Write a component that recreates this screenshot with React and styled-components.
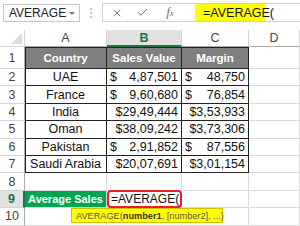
import React from 'react';
import styled, { createGlobalStyle, css } from 'styled-components';
import { X, Check } from 'lucide-react';

const GlobalStyle = createGlobalStyle`
  html, body { margin: 0; padding: 0; background: #fff; }
  body { font-family: "Liberation Sans", Arial, sans-serif; overflow: hidden; }
  * { box-sizing: border-box; }
`;

const Page = styled.div`
  width: 300px;
  height: 226px;
  overflow: hidden;
  background: #fff;
`;

const FormulaBar = styled.div`
  height: 30px;
  display: flex;
  align-items: flex-start;
  padding: 4px 0 0 3px;
`;

const NameBox = styled.div`
  width: 77px;
  height: 18px;
  border: 1px solid #c6c6c6;
  display: flex;
  align-items: center;
  justify-content: space-between;
  padding: 0 4px 0 5px;
  font-size: 12px;
  color: #222;
`;

const Caret = styled.span`
  width: 0;
  height: 0;
  border-left: 3px solid transparent;
  border-right: 3px solid transparent;
  border-top: 3px solid #777;
`;

const Dots = styled.div`
  width: 22px;
  height: 18px;
  display: flex;
  flex-direction: column;
  align-items: center;
  justify-content: center;
  gap: 2px;
  span { width: 2px; height: 2px; background: #c4c4c4; }
`;

const InputBox = styled.div`
  flex: 1;
  height: 19px;
  border: 1px solid #d0d0d0;
  border-right: none;
  margin-top: -1px;
  display: flex;
  align-items: center;
`;

const IconBtn = styled.div`
  width: ${p => p.$w}px;
  display: flex;
  justify-content: center;
  align-items: center;
  color: #555;
`;

const Fx = styled.span`
  font-family: "Liberation Serif", serif;
  font-style: italic;
  font-size: 12px;
  color: #666;
  sub { font-size: 8px; vertical-align: 0; }
`;

const Formula = styled.div`
  height: 17px;
  width: 70px;
  margin-left: 8px;
  background: #ffff00;
  font-size: 12.5px;
  color: #111;
  display: flex;
  align-items: center;
  padding-left: 8px;
`;

const Sheet = styled.div`
  display: grid;
  grid-template-columns: 25px 82px 75px 67px 51px;
  grid-template-rows: 17px 22px repeat(9, 17.4px);
`;

const Corner = styled.div`
  background: #fff;
  border-right: 1px solid #d4d4d4;
  border-bottom: 1px solid #d4d4d4;
  position: relative;
  &::after {
    content: '';
    position: absolute;
    right: 2px;
    bottom: 2px;
    border-left: 11px solid transparent;
    border-bottom: 11px solid #dcdcdc;
  }
`;

const ColHead = styled.div`
  display: flex;
  align-items: center;
  justify-content: center;
  font-size: 12.5px;
  color: #444;
  background: #fff;
  border-right: 1px solid #d4d4d4;
  border-bottom: 1px solid #ababab;
  ${p => p.$active && css`
    background: #e1e1e1;
    color: #217346;
    font-weight: bold;
    border-bottom: 2px solid #217346;
  `}
`;

const RowHead = styled.div`
  display: flex;
  align-items: center;
  justify-content: center;
  font-size: 12.5px;
  color: #444;
  background: #fff;
  border-right: 1px solid #ababab;
  border-bottom: 1px solid #d4d4d4;
  ${p => p.$active && css`
    background: #e1e1e1;
    color: #217346;
    font-weight: bold;
    border-right: 2px solid #217346;
  `}
`;

const Cell = styled.div`
  display: flex;
  align-items: center;
  font-size: 12.5px;
  color: #111;
  padding: 0 3px;
  border-right: 1px solid #dadada;
  border-bottom: 1px solid #dadada;
  white-space: nowrap;
  position: relative;
  ${p => p.$table && css`
    border-right-color: #222;
    border-bottom-color: #222;
  `}
  ${p => p.$first && css`box-shadow: inset 1px 0 #222;`}
  ${p => p.$center && css`justify-content: center;`}
  ${p => p.$money && css`justify-content: space-between; padding: 0 3px 0 3px;`}
  ${p => p.$wide && css`justify-content: flex-end; padding: 0 3px 0 2px;`}
  ${p => p.$head && css`
    background: #7f7f7f;
    color: #fff;
    font-weight: bold;
    font-size: 11.5px;
    justify-content: center;
    border-top: 1px solid #222;
  `}
  ${p => p.$green && css`
    background: #00a650;
    color: #fff;
    font-weight: bold;
    font-size: 11px;
    justify-content: center;
  `}
`;

const ActiveCell = styled(Cell)`
  overflow: visible;
  font-size: 12px;
  padding-left: 4px;
  &::before {
    content: '';
    position: absolute;
    left: 0;
    top: -1px;
    right: -1px;
    bottom: -1px;
    border: 2px solid #e8202a;
    border-radius: 4px;
  }
`;

const Caret2 = styled.span`
  display: inline-block;
  width: 1px;
  height: 13px;
  background: #000;
  margin-left: 1px;
`;

const Tip = styled.div`
  position: absolute;
  left: -36px;
  top: calc(100% + 1px);
  width: 152px;
  height: 15px;
  background: #ffff00;
  border: 1px solid #c9c400;
  font-size: 9.2px;
  color: #555;
  display: flex;
  align-items: center;
  padding-left: 4px;
  white-space: nowrap;
  z-index: 2;
  b { color: #333; }
`;

const data = [
  ['UAE', '4,87,501', '48,750'],
  ['France', '9,60,680', '76,854'],
  ['India', '29,49,444', '3,53,933'],
  ['Oman', '38,09,242', '3,73,306'],
  ['Pakistan', '2,91,852', '87,556'],
  ['Saudi Arabia', '20,07,691', '3,01,154'],
];

// small amounts keep the $ at the left edge, big ones sit right against it
const Money = ({ value, wide }) =>
  wide ? (
    <Cell $table $wide>${value}</Cell>
  ) : (
    <Cell $table $money>
      <span>$</span>
      <span>{value}</span>
    </Cell>
  );

export default function App() {
  return (
    <Page>
      <GlobalStyle />
      <FormulaBar>
        <NameBox>
          AVERAGE
          <Caret />
        </NameBox>
        <Dots><span /><span /><span /></Dots>
        <InputBox>
          <IconBtn $w={28}><X size={12} strokeWidth={1.5} /></IconBtn>
          <IconBtn $w={22}><Check size={13} strokeWidth={1.6} /></IconBtn>
          <IconBtn $w={34}><Fx>f<sub>x</sub></Fx></IconBtn>
          <Formula>=AVERAGE(</Formula>
        </InputBox>
      </FormulaBar>
      <Sheet>
        <Corner />
        <ColHead>A</ColHead>
        <ColHead $active>B</ColHead>
        <ColHead>C</ColHead>
        <ColHead>D</ColHead>

        <RowHead>1</RowHead>
        <Cell $table $first $head>Country</Cell>
        <Cell $table $head>Sales Value</Cell>
        <Cell $table $head>Margin</Cell>
        <Cell />

        {data.map((r, i) => (
          <React.Fragment key={r[0]}>
            <RowHead>{i + 2}</RowHead>
            <Cell $table $first $center>{r[0]}</Cell>
            <Money value={r[1]} wide={r[1].length > 8} />
            <Money value={r[2]} wide={r[2].length > 6} />
            <Cell />
          </React.Fragment>
        ))}

        <RowHead>8</RowHead>
        <Cell /><Cell /><Cell /><Cell />

        <RowHead $active>9</RowHead>
        <Cell $green>Average Sales</Cell>
        <ActiveCell>
          =AVERAGE(<Caret2 />
          <Tip>AVERAGE(<b>number1</b>, [number2], ...)</Tip>
        </ActiveCell>
        <Cell /><Cell />

        <RowHead>10</RowHead>
        <Cell /><Cell /><Cell /><Cell />
      </Sheet>
    </Page>
  );
}
